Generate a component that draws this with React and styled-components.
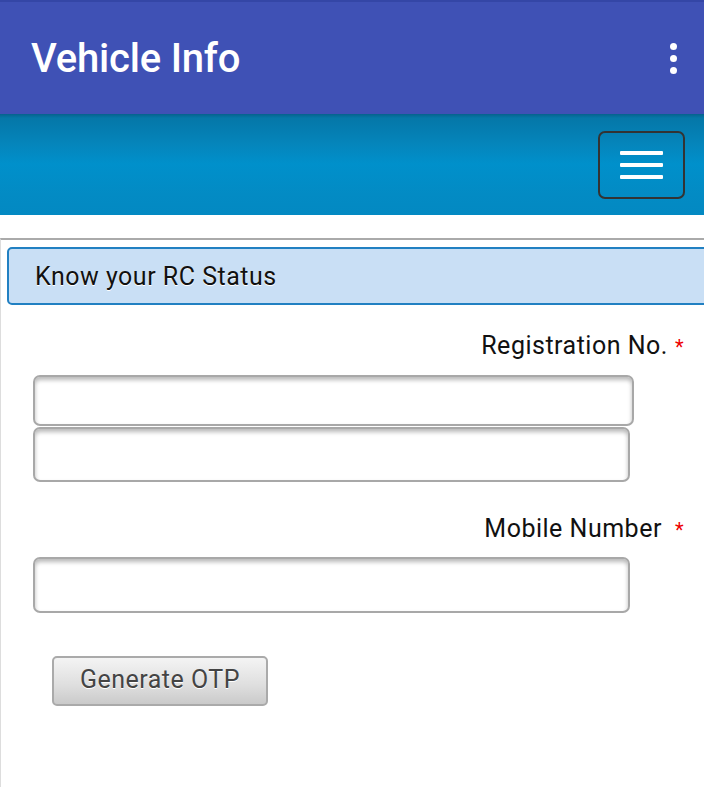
import styled, { createGlobalStyle } from "styled-components";

const GlobalStyle = createGlobalStyle`
	html, body {
		margin: 0;
		padding: 0;
		background: #ffffff;
		overflow: hidden;
		font-family: Roboto, "Noto Sans", "Liberation Sans", sans-serif;
	}
`;

// Page
const Page = styled.div`
	width: 704px;
	height: 787px;
	display: flex;
	flex-direction: column;
	overflow: hidden;
`;

// Top app bar
const AppBar = styled.div`
	height: 112px;
	border-top: 2px solid #3446a6;
	background: #3f51b5;
	display: flex;
	align-items: center;
	justify-content: space-between;
	padding: 0 27px 0 31px;
	.title {
		color: #ffffff;
		font-size: 40px;
		font-weight: 500;
		margin: 0;
		letter-spacing: -0.2px;
	}
`;
const MoreDots = styled.div`
	display: flex;
	flex-direction: column;
	gap: 5px;
	span {
		width: 7px;
		height: 7px;
		border-radius: 50%;
		background: #ffffff;
	}
`;

// Site header under the app bar
const SiteBar = styled.div`
	height: 101px;
	background: linear-gradient(
		to bottom,
		#05628d 0px,
		#0577a8 4px,
		#0585bb 30px,
		#0090cb 50px,
		#038bc4 80px,
		#0389c2 101px
	);
	display: flex;
	justify-content: flex-end;
	align-items: flex-start;
	padding-right: 19px;
`;
const MenuToggle = styled.button`
	margin-top: 17px;
	width: 87px;
	height: 68px;
	background: transparent;
	border: 2px solid #333333;
	border-radius: 7px;
	display: flex;
	flex-direction: column;
	align-items: center;
	justify-content: center;
	gap: 8px;
	padding: 0;
	span {
		width: 43px;
		height: 4px;
		border-radius: 1px;
		background: #ffffff;
	}
`;

// Main panel
const Panel = styled.div`
	margin-top: 23px;
	flex: 1;
	border-top: 2px solid #aaaaaa;
	border-left: 1px solid #dddddd;
	padding-top: 7px;
	padding-left: 6px;
	font-size: 25px;
	letter-spacing: 0.5px;
`;
const PanelHeading = styled.div`
	height: 54px;
	margin-right: -12px;
	background: #c9dff5;
	border: 2px solid #2180c2;
	border-radius: 5px;
	display: flex;
	align-items: center;
	padding-left: 26px;
	color: #111111;
	text-shadow: 0 1px 0 #ffffff;
`;

const Form = styled.div`
	display: flex;
	flex-direction: column;
	padding-left: 26px;
`;
const LabelRow = styled.div`
	display: flex;
	justify-content: flex-end;
	align-items: center;
	height: 30px;
	margin-top: ${(p) => p.$top}px;
	padding-right: 20px;
	color: #111111;
	.text {
		margin-right: ${(p) => p.$gap}px;
	}
	.req {
		color: #ee0000;
		font-size: 20px;
		line-height: 1;
		margin-top: 4px;
	}
`;
const TextBox = styled.input`
	box-sizing: border-box;
	width: ${(p) => p.$w}px;
	height: ${(p) => p.$h}px;
	margin-top: ${(p) => p.$top}px;
	border: 2px solid #a8a8a8;
	border-radius: 7px;
	background: #ffffff;
	box-shadow: inset 0 3px 4px rgba(0, 0, 0, 0.28);
	padding: 0 10px;
	font-size: 22px;
	font-family: inherit;
	outline: none;
`;
const OtpButton = styled.button`
	margin-top: 43px;
	margin-left: 19px;
	align-self: flex-start;
	width: 216px;
	height: 50px;
	border: 2px solid #aaaaaa;
	border-radius: 5px;
	background: linear-gradient(to bottom, #f4f4f4 0%, #dedede 60%, #cacaca 100%);
	color: #444444;
	font-family: inherit;
	font-size: 25px;
	letter-spacing: 0.5px;
	text-shadow: 0 1px 0 #ffffff;
	padding: 0 0 3px 0;
`;

const App = () => {
	return (
		<Page>
			<GlobalStyle />
			<AppBar>
				<h1 className="title">Vehicle Info</h1>
				<MoreDots>
					<span />
					<span />
					<span />
				</MoreDots>
			</AppBar>

			<SiteBar>
				<MenuToggle aria-label="menu">
					<span />
					<span />
					<span />
				</MenuToggle>
			</SiteBar>

			<Panel>
				<PanelHeading>Know your RC Status</PanelHeading>
				<Form>
					<LabelRow $top={25} $gap={7}>
						<span className="text">Registration No.</span>
						<span className="req">*</span>
					</LabelRow>
					<TextBox $top={15} $w={601} $h={51} />
					<TextBox $top={1} $w={597} $h={55} />

					<LabelRow $top={31} $gap={13}>
						<span className="text">Mobile Number</span>
						<span className="req">*</span>
					</LabelRow>
					<TextBox $top={14} $w={597} $h={56} />

					<OtpButton>Generate OTP</OtpButton>
				</Form>
			</Panel>
		</Page>
	);
};

export default App;
